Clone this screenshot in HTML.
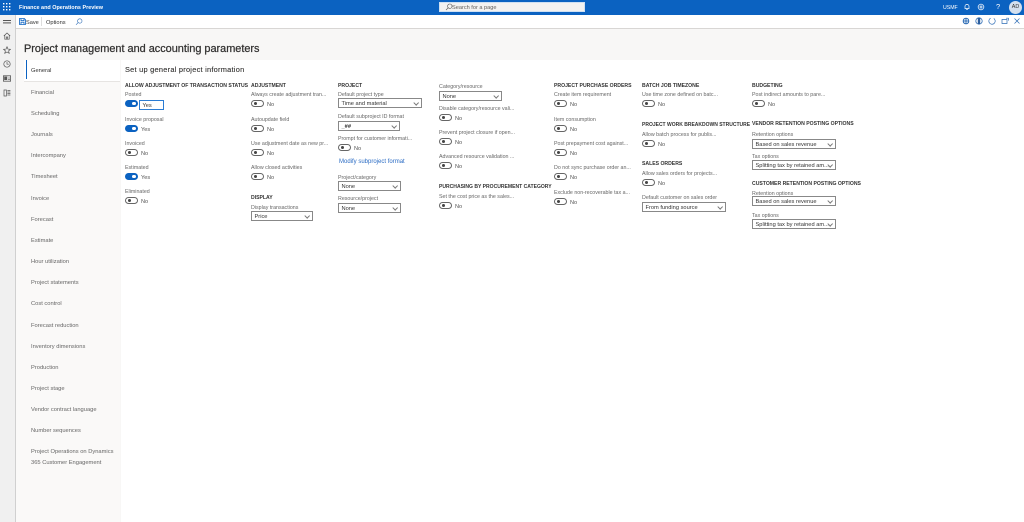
<!DOCTYPE html>
<html><head><meta charset="utf-8"><title>Project management and accounting parameters</title>
<style>
html,body{margin:0;padding:0}
body{width:1024px;height:522px;overflow:hidden;position:relative;background:#f8f7f6;font-family:"Liberation Sans",sans-serif;font-size:5.3px;color:#605e5c;filter:blur(.25px)}
div,svg,a{position:absolute;white-space:nowrap}
.top{left:0;top:0;width:1024px;height:15px;background:#0b62c1}
.bar{left:0;top:15px;width:1024px;height:13px;background:#fff;border-bottom:1px solid #d8d6d4}
.rail{left:0;top:15px;width:15px;height:507px;background:#f0f0f0;border-right:1px solid #d0d0d0}
.panel{left:16px;top:60px;width:104px;height:462px;background:#faf9f8}
.main{left:121px;top:60px;width:903px;height:462px;background:#fff}
.n{left:31px;font-size:5.75px;line-height:8px;color:#666;padding-top:.7px}
.h{font-weight:bold;font-size:5.12px;color:#333;line-height:6px;padding-top:.6px}
.l{line-height:6px;color:#666;padding-top:.7px}
.f{line-height:6px;color:#666;padding-top:.7px}
.f i{position:absolute;left:0;top:9px;width:10.8px;height:4.6px;border:.8px solid #666;border-radius:4px;background:#fff}
.f i:after{content:"";position:absolute;left:1.6px;top:.5px;width:3.6px;height:3.6px;border-radius:50%;background:#444}
.f i.on{background:#0b62c1;border-color:#0b62c1}
.f i.on:after{left:6.4px;background:#fff}
.f b{position:absolute;left:16px;top:10.5px;font-weight:normal;font-size:5.6px;color:#555}
.s{box-sizing:border-box;height:10px;border:.7px solid #888;background:#fff;color:#333;font-size:5.7px;line-height:8.5px;padding-left:2.5px;padding-top:.9px}
.s:after{content:"";position:absolute;right:3px;top:1.6px;width:3.4px;height:3.4px;border-right:.5px solid #777;border-bottom:.5px solid #777;transform:rotate(45deg)}
</style></head><body>
<div class="top"></div>
<svg style="left:3px;top:3px" width="8" height="8" fill="#fff"><rect x="0" y="0" width="1.4" height="1.4"/><rect x="3" y="0" width="1.4" height="1.4"/><rect x="6" y="0" width="1.4" height="1.4"/><rect x="0" y="3" width="1.4" height="1.4"/><rect x="3" y="3" width="1.4" height="1.4"/><rect x="6" y="3" width="1.4" height="1.4"/><rect x="0" y="6" width="1.4" height="1.4"/><rect x="3" y="6" width="1.4" height="1.4"/><rect x="6" y="6" width="1.4" height="1.4"/></svg>
<div style="left:19px;top:4.6px;color:#fff;font-weight:bold;font-size:5.45px;line-height:6px">Finance and Operations Preview</div>
<div style="left:439px;top:2px;width:146px;height:10px;background:#f3f2f1;border:.5px solid #cfe0f2;box-sizing:border-box"></div>
<svg style="left:445px;top:3px" width="8" height="8" fill="none" stroke="#555" stroke-width=".6"><circle cx="4.8" cy="3.2" r="2.2"/><path d="M3.2 4.8L1 7"/></svg>
<div style="left:452px;top:4.6px;font-size:5.6px;line-height:6px;color:#605e5c">Search for a page</div>
<div style="left:943px;top:4.6px;color:#fff;font-size:5.2px;line-height:6px">USMF</div>
<svg style="left:963px;top:3px" width="8" height="8" fill="none" stroke="#fff" stroke-width=".7"><path d="M2 5.5V3.4a2 2 0 0 1 4 0v2.1zM3.2 6.6h1.6"/></svg>
<svg style="left:977px;top:3px" width="8" height="8" fill="none" stroke="#d5e3f5" stroke-width=".9"><circle cx="4" cy="4" r="2.8"/><circle cx="4" cy="4" r="1"/></svg>
<div style="left:996px;top:3px;color:#fff;font-size:7.5px;line-height:8px">?</div>
<div style="left:1009px;top:1px;width:13px;height:13px;border-radius:50%;background:#d3dfee;color:#333;font-size:5.4px;line-height:13px;text-align:center">AD</div>
<div class="bar"></div>
<svg style="left:19px;top:18px" width="7" height="7" fill="none" stroke="#0b62c1" stroke-width=".8"><path d="M.5.5h4.8l1.2 1.2v4.8H.5z"/><path d="M2 .8v1.8h3V.8M2 6.3V4.2h3v2.1"/></svg>
<div style="left:26px;top:19.6px;font-size:5.6px;line-height:6px;color:#333">Save</div>
<div style="left:41px;top:17px;width:.6px;height:9px;background:#ddd"></div>
<div style="left:46px;top:19.6px;font-size:5.7px;line-height:6px;color:#333">Options</div>
<svg style="left:75px;top:18px" width="8" height="8" fill="none" stroke="#2d6cb5" stroke-width=".6"><circle cx="4.8" cy="3" r="2.2"/><path d="M3.2 4.6L1 6.8"/></svg>
<svg style="left:962px;top:17px" width="8" height="8" fill="none" stroke="#2d6cb5" stroke-width="1"><circle cx="4" cy="4" r="2.8"/><path d="M1.5 4h5M4 1.2v5.6"/></svg>
<svg style="left:975px;top:17px" width="8" height="8"><circle cx="4" cy="4" r="3.2" fill="none" stroke="#2d6cb5" stroke-width=".8"/><path d="M2.8 1h2.4v6H2.8z" fill="#2d5f9e"/></svg>
<svg style="left:988px;top:17px" width="8" height="8" fill="none" stroke="#2d6cb5" stroke-width=".7"><path d="M5.8 1.4A3.2 3.2 0 1 1 2.6 1.2"/></svg>
<svg style="left:1001px;top:17px" width="8" height="8" fill="none" stroke="#2d6cb5" stroke-width=".7"><path d="M1 2.5h5v4H1zM5 1.2h2.4v2.4"/></svg>
<svg style="left:1013px;top:17px" width="8" height="8" fill="none" stroke="#2d6cb5" stroke-width=".7"><path d="M1.5 1.5l5 5M6.5 1.5l-5 5"/></svg>
<div class="rail"></div>
<svg style="left:3px;top:20px" width="9" height="5" fill="#555"><rect y="0" width="8" height="1"/><rect y="2.4" width="8" height="1"/></svg>
<svg style="left:3px;top:32px" width="8" height="8" fill="none" stroke="#555" stroke-width=".7"><path d="M.8 4L4 1l3.2 3M1.8 3.4v3.8h4.4V3.4M3.3 7.2V5h1.4v2.2"/></svg>
<svg style="left:3px;top:46px" width="8" height="8" fill="none" stroke="#555" stroke-width=".7"><path d="M4 .8l1 2.3 2.4.2-1.8 1.6.6 2.4L4 6 1.8 7.3l.6-2.4L.6 3.3 3 3.1z"/></svg>
<svg style="left:3px;top:60px" width="8" height="8" fill="none" stroke="#555" stroke-width=".7"><circle cx="4" cy="4" r="3.2"/><path d="M4 2v2.2h1.8"/></svg>
<svg style="left:3px;top:75px" width="8" height="7"><rect x=".4" y=".8" width="7.2" height="5.4" fill="none" stroke="#555" stroke-width=".8"/><rect x="1.2" y="1.6" width="3" height="3.4" fill="#555"/><path d="M5 3h2M5 4.6h2" stroke="#555" stroke-width=".6"/></svg>
<svg style="left:3px;top:89px" width="8" height="8" fill="none" stroke="#555" stroke-width=".7"><path d="M1 1h2.4v6H1zM4.4 1.5h3M4.4 3h3M4.4 4.5h3M4.4 6h3"/></svg>
<div style="left:24px;top:41.6px;font-size:10.9px;line-height:14px;color:#323130;-webkit-text-stroke:.25px #323130">Project management and accounting parameters</div>
<div class="panel"></div>
<div style="left:24px;top:60px;width:96px;height:21px;background:#fff;border-bottom:.7px solid #e6e4e2"></div>
<div style="left:25.5px;top:60px;width:1.6px;height:19px;background:#0b62c1"></div>
<div class="main"></div>
<div class="n" style="top:66px;color:#333">General</div>
<div class="n" style="top:88px">Financial</div>
<div class="n" style="top:109px">Scheduling</div>
<div class="n" style="top:130px">Journals</div>
<div class="n" style="top:151px">Intercompany</div>
<div class="n" style="top:172px">Timesheet</div>
<div class="n" style="top:194px">Invoice</div>
<div class="n" style="top:215px">Forecast</div>
<div class="n" style="top:236px">Estimate</div>
<div class="n" style="top:257px">Hour utilization</div>
<div class="n" style="top:278px">Project statements</div>
<div class="n" style="top:299px">Cost control</div>
<div class="n" style="top:321px">Forecast reduction</div>
<div class="n" style="top:342px">Inventory dimensions</div>
<div class="n" style="top:363px">Production</div>
<div class="n" style="top:384px">Project stage</div>
<div class="n" style="top:405px">Vendor contract language</div>
<div class="n" style="top:426px">Number sequences</div>
<div class="n" style="top:447px">Project Operations on Dynamics</div>
<div class="n" style="top:458px">365 Customer Engagement</div>
<div style="left:125px;top:65px;font-size:7.4px;letter-spacing:.25px;line-height:9px;color:#323130;-webkit-text-stroke:.12px #323130">Set up general project information</div>

<div class="h" style="left:125px;top:82px">ALLOW ADJUSTMENT OF TRANSACTION STATUS</div>
<div class="f" style="left:125px;top:91px">Posted<i class="on"></i></div>
<div style="left:139px;top:100px;width:25px;height:10px;box-sizing:border-box;border:.8px solid #2b7cd3;background:#fff;color:#333;font-size:5.7px;line-height:8.5px;padding-left:2.5px;padding-top:.9px">Yes</div>
<div class="f" style="left:125px;top:116px">Invoice proposal<i class="on"></i><b>Yes</b></div>
<div class="f" style="left:125px;top:140px">Invoiced<i></i><b>No</b></div>
<div class="f" style="left:125px;top:164px">Estimated<i class="on"></i><b>Yes</b></div>
<div class="f" style="left:125px;top:188px">Eliminated<i></i><b>No</b></div>

<div class="h" style="left:251px;top:82px">ADJUSTMENT</div>
<div class="f" style="left:251px;top:91px">Always create adjustment tran...<i></i><b>No</b></div>
<div class="f" style="left:251px;top:116px">Autoupdate field<i></i><b>No</b></div>
<div class="f" style="left:251px;top:140px">Use adjustment date as new pr...<i></i><b>No</b></div>
<div class="f" style="left:251px;top:164px">Allow closed activities<i></i><b>No</b></div>
<div class="h" style="left:251px;top:194px">DISPLAY</div>
<div class="l" style="left:251px;top:204px">Display transactions</div>
<div class="s" style="left:251px;top:211px;width:62px">Price</div>

<div class="h" style="left:338px;top:82px">PROJECT</div>
<div class="l" style="left:338px;top:91px">Default project type</div>
<div class="s" style="left:338px;top:98px;width:84px">Time and material</div>
<div class="l" style="left:338px;top:113px">Default subproject ID format</div>
<div class="s" style="left:338px;top:121px;width:62px;font-weight:bold">_##</div>
<div class="f" style="left:338px;top:135px">Prompt for customer informati...<i></i><b>No</b></div>
<div style="left:339px;top:159px;font-size:6px;line-height:7px;color:#2b6cc4">Modify subproject format</div>
<div class="l" style="left:338px;top:174px">Project/category</div>
<div class="s" style="left:338px;top:181px;width:63px">None</div>
<div class="l" style="left:338px;top:195px">Resource/project</div>
<div class="s" style="left:338px;top:203px;width:63px">None</div>

<div class="l" style="left:439px;top:83px">Category/resource</div>
<div class="s" style="left:439px;top:91px;width:63px">None</div>
<div class="f" style="left:439px;top:105px">Disable category/resource vali...<i></i><b>No</b></div>
<div class="f" style="left:439px;top:129px">Prevent project closure if open...<i></i><b>No</b></div>
<div class="f" style="left:439px;top:153px">Advanced resource validation ...<i></i><b>No</b></div>
<div class="h" style="left:439px;top:183px;font-size:5.05px">PURCHASING BY PROCUREMENT CATEGORY</div>
<div class="f" style="left:439px;top:193px">Set the cost price as the sales...<i></i><b>No</b></div>

<div class="h" style="left:554px;top:82px">PROJECT PURCHASE ORDERS</div>
<div class="f" style="left:554px;top:91px">Create item requirement<i></i><b>No</b></div>
<div class="f" style="left:554px;top:116px">Item consumption<i></i><b>No</b></div>
<div class="f" style="left:554px;top:140px">Post prepayment cost against...<i></i><b>No</b></div>
<div class="f" style="left:554px;top:164px">Do not sync purchase order an...<i></i><b>No</b></div>
<div class="f" style="left:554px;top:189px">Exclude non-recoverable tax a...<i></i><b>No</b></div>

<div class="h" style="left:642px;top:82px">BATCH JOB TIMEZONE</div>
<div class="f" style="left:642px;top:91px">Use time zone defined on batc...<i></i><b>No</b></div>
<div class="h" style="left:642px;top:121px;font-size:5px">PROJECT WORK BREAKDOWN STRUCTURE</div>
<div class="f" style="left:642px;top:131px">Allow batch process for publis...<i></i><b>No</b></div>
<div class="h" style="left:642px;top:160px">SALES ORDERS</div>
<div class="f" style="left:642px;top:170px">Allow sales orders for projects...<i></i><b>No</b></div>
<div class="l" style="left:642px;top:194px">Default customer on sales order</div>
<div class="s" style="left:642px;top:202px;width:84px">From funding source</div>

<div class="h" style="left:752px;top:82px">BUDGETING</div>
<div class="f" style="left:752px;top:91px">Post indirect amounts to pare...<i></i><b>No</b></div>
<div class="h" style="left:752px;top:120px">VENDOR RETENTION POSTING OPTIONS</div>
<div class="l" style="left:752px;top:131px">Retention options</div>
<div class="s" style="left:752px;top:139px;width:84px">Based on sales revenue</div>
<div class="l" style="left:752px;top:153px">Tax options</div>
<div class="s" style="left:752px;top:160px;width:84px">Splitting tax by retained am...</div>
<div class="h" style="left:752px;top:180px">CUSTOMER RETENTION POSTING OPTIONS</div>
<div class="l" style="left:752px;top:190px">Retention options</div>
<div class="s" style="left:752px;top:196px;width:84px">Based on sales revenue</div>
<div class="l" style="left:752px;top:212px">Tax options</div>
<div class="s" style="left:752px;top:219px;width:84px">Splitting tax by retained am...</div>
</body></html>
